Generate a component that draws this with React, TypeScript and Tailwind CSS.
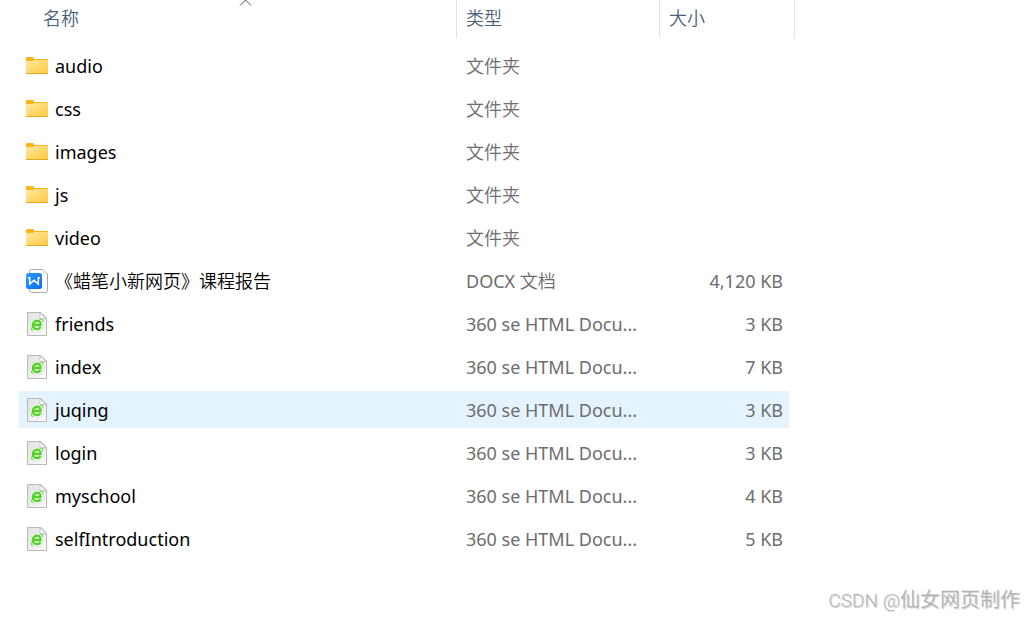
import React from 'react';

type FileKind = 'folder' | 'docx' | 'html';

interface FileEntry {
  name: string;
  kind: FileKind;
  size?: string;
}

const files: FileEntry[] = [
  { name: 'audio', kind: 'folder' },
  { name: 'css', kind: 'folder' },
  { name: 'images', kind: 'folder' },
  { name: 'js', kind: 'folder' },
  { name: 'video', kind: 'folder' },
  { name: '《蜡笔小新网页》课程报告', kind: 'docx', size: '4,120 KB' },
  { name: 'friends', kind: 'html', size: '3 KB' },
  { name: 'index', kind: 'html', size: '7 KB' },
  { name: 'juqing', kind: 'html', size: '3 KB' },
  { name: 'login', kind: 'html', size: '3 KB' },
  { name: 'myschool', kind: 'html', size: '4 KB' },
  { name: 'selfIntroduction', kind: 'html', size: '5 KB' },
];

const typeLabels: Record<FileKind, string> = {
  folder: '文件夹',
  docx: 'DOCX 文档',
  html: '360 se HTML Docu...',
};

const FolderIcon: React.FC = () => (
  <svg width="24" height="24" viewBox="0 0 24 24" aria-hidden="true">
    <defs>
      <linearGradient id="folder-front" x1="0" y1="0" x2="1" y2="1">
        <stop offset="0" stopColor="#ffe9a3" />
        <stop offset="1" stopColor="#ffc83a" />
      </linearGradient>
    </defs>
    <path d="M1 4q0-1 1-1h6l1.500 2H22q1 0 1 1V12H1z" fill="#f9b616" />
    <path d="M1 7h7l1.500-1H23V19q0 1-1 1H2q-1 0-1-1z" fill="url(#folder-front)" />
    <path d="M1 19.500h22" stroke="#e9a91f" strokeWidth="1" />
  </svg>
);

const DocxIcon: React.FC = () => (
  <svg width="24" height="24" viewBox="0 0 24 24" aria-hidden="true">
    <defs>
      <linearGradient id="docx-badge" x1="0" y1="0" x2="1" y2="1">
        <stop offset="0" stopColor="#2f9bff" />
        <stop offset="1" stopColor="#0a6cff" />
      </linearGradient>
    </defs>
    <path
      d="M6.500 0.500H18L22.500 5V21.500q0 2-2 2H6.500q-2 0-2-2V2.500q0-2 2-2z"
      fill="#fff"
      stroke="#a3abb8"
    />
    <path d="M18 0.500L22.500 5H20q-2 0-2-2z" fill="#e4e8ee" />
    <rect x="1" y="4" width="16" height="16" rx="2.500" fill="url(#docx-badge)" />
    <path d="M3 8.700H4.700V15L9 11.300L13.300 15V8.700H15" fill="none" stroke="#fff" strokeWidth="1.500" />
  </svg>
);

const HtmlIcon: React.FC = () => (
  <svg width="24" height="24" viewBox="0 0 24 24" aria-hidden="true">
    <defs>
      <linearGradient id="html-page" x1="0" y1="0" x2="1" y2="1">
        <stop offset="0" stopColor="#e2e2e2" />
        <stop offset="1" stopColor="#fcfcfc" />
      </linearGradient>
    </defs>
    <path d="M2.500 0.500H16L21.500 6V23.500h-19z" fill="url(#html-page)" stroke="#b9b9b9" />
    <path d="M15 1l6.500 6.500q-3-2-6.500-1z" fill="#fff" stroke="#b9b9b9" strokeWidth="0.800" />
    <circle cx="12" cy="13" r="7" fill="#f3f7f1" stroke="#d5d9d3" strokeWidth="0.600" />
    <path
      d="M8.200 13H15.600C15.700 10.300 14.100 8.700 12 8.700C9.600 8.700 7.800 10.600 7.800 13C7.800 15.500 9.600 17.100 11.900 17.100C13.600 17.100 14.900 16.300 15.600 15"
      fill="none"
      stroke="#4fd420"
      strokeWidth="2.300"
    />
    <path
      d="M8.500 17.800C5.800 19.500 6 16.300 8.300 13.300C11 9.800 15.500 6.700 17.500 7.300C18.300 7.700 18 9 17.100 10.200"
      fill="none"
      stroke="#58cf32"
      strokeWidth="1"
    />
  </svg>
);

const FileIcon: React.FC<{ kind: FileKind }> = ({ kind }) => {
  if (kind === 'folder') return <FolderIcon />;
  if (kind === 'docx') return <DocxIcon />;
  return <HtmlIcon />;
};

const cell = 'h-[43px] border-y-3 border-transparent bg-clip-padding p-0';
const heading = 'h-[38px] w-full border-r border-[#e2e2e2] pb-[2px] text-left';

export default function App() {
  const selected = 'juqing';

  return (
    <main className="relative min-h-screen bg-white pl-[19px] font-['Noto_Sans','Noto_Sans_CJK_SC_DemiLight','Noto_Sans_CJK_SC',sans-serif] text-lg leading-6">
      <table className="w-[776px] max-w-full table-fixed border-separate border-spacing-0">
        <colgroup>
          <col className="w-[438px]" />
          <col className="w-[203px]" />
          <col className="w-[135px]" />
        </colgroup>
        <thead className="text-[#4c607a]">
          <tr>
            <th className="relative h-11 p-0 align-top font-[350]" aria-sort="ascending">
              <button type="button" className={`${heading} pl-6`}>名称</button>
              <svg className="absolute top-0 left-[220px]" width="13" height="6" viewBox="0 0 13 6" aria-hidden="true">
                <path d="M1 5.500L6.500 0L12 5.500" fill="none" stroke="#555" />
              </svg>
            </th>
            <th className="h-11 p-0 align-top font-[350]">
              <button type="button" className={`${heading} pl-[9px]`}>类型</button>
            </th>
            <th className="h-11 p-0 align-top font-[350]">
              <button type="button" className={`${heading} pl-[9px]`}>大小</button>
            </th>
          </tr>
        </thead>
        <tbody>
          {files.map((file) => {
            const fill = file.name === selected ? 'bg-[#e5f3ff]' : '';
            return (
              <tr key={file.name}>
                <td className={`${cell} ${fill} rounded-l text-black`}>
                  <div className="flex items-center gap-[6px] pl-[6px]">
                    <FileIcon kind={file.kind} />
                    <span className="whitespace-nowrap">{file.name}</span>
                  </div>
                </td>
                <td className={`${cell} ${fill} whitespace-nowrap text-[#6d6d6d]`}>
                  <span className="pl-[9px]">{typeLabels[file.kind]}</span>
                </td>
                <td className={`${cell} ${fill} rounded-r border-r-6 text-right whitespace-nowrap text-[#6d6d6d]`}>
                  <span className="pr-[6px]">{file.size}</span>
                </td>
              </tr>
            );
          })}
        </tbody>
      </table>
      <p className="absolute right-1 bottom-[5px] font-['Roboto','Noto_Sans_CJK_SC_DemiLight','Noto_Sans_CJK_SC',sans-serif] text-xl leading-6 font-[350] text-[#b4b4b4] [text-shadow:1px_1px_1px_#d0d0d0]">
        <span className="text-[19px]">CSDN @</span>仙女网页制作
      </p>
    </main>
  );
}
